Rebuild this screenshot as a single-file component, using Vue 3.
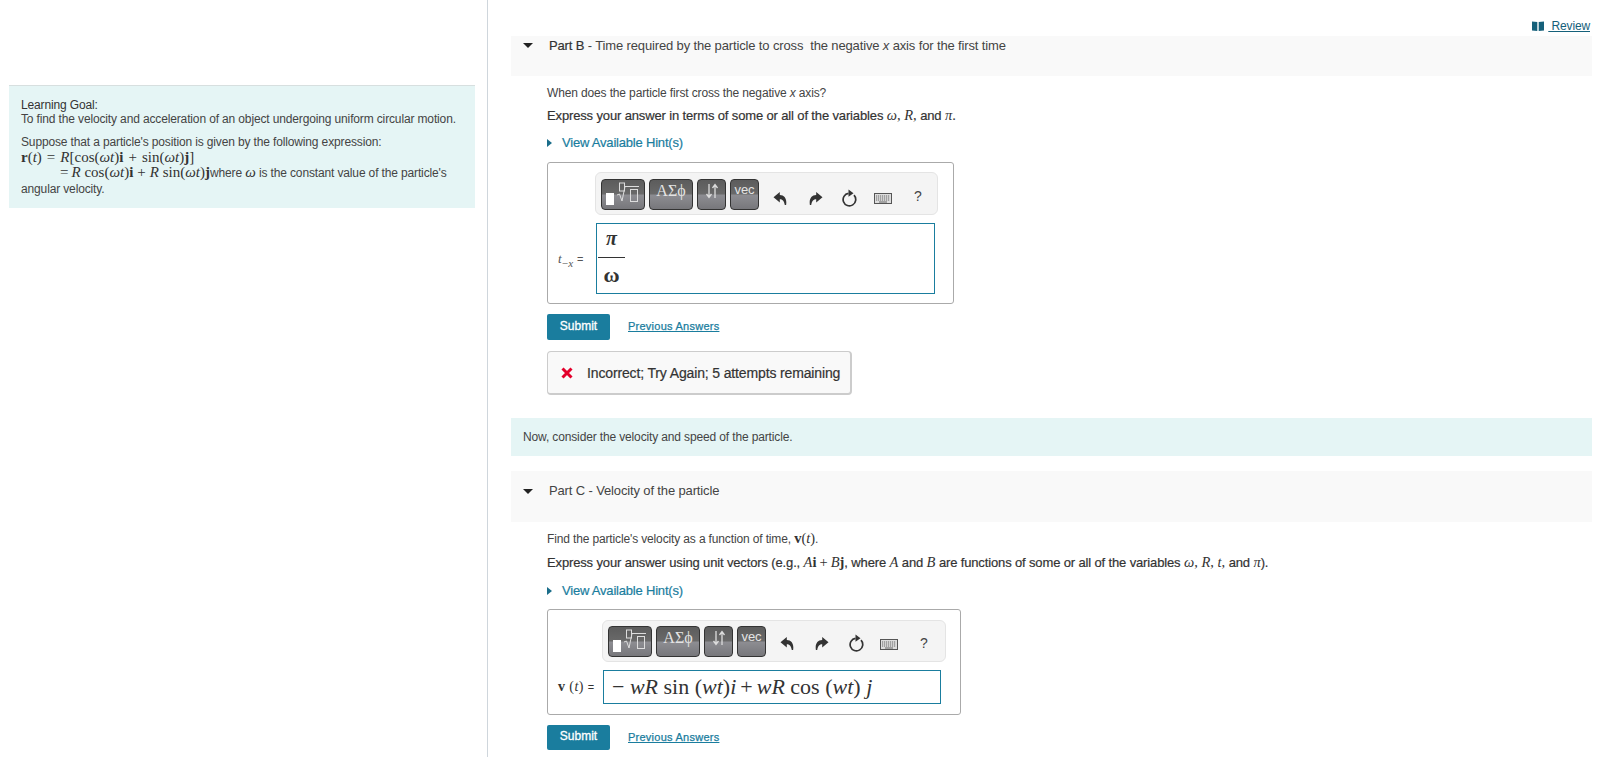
<script setup>
</script>

<template>
  <div class="page">
    <svg class="defs" width="0" height="0" aria-hidden="true">
      <symbol id="undo" viewBox="0 0 14 15"><path d="M6.800 1 .5 6.300l6.300 5.200V8.300c2.600 0 4.200 1.300 5 5.700h1.300c1-6-1.400-9.800-6.300-10z" fill="#333"/></symbol>
      <symbol id="redo" viewBox="0 0 14 15"><path d="M7.200 1l6.300 5.300-6.300 5.200V8.300c-2.600 0-4.200 1.300-5 5.700H.9C-.1 8 2.300 4.200 7.200 4z" fill="#333"/></symbol>
      <symbol id="reload" viewBox="0 0 17 18"><path d="M7.500 4.300A6.300 6.300 0 1 0 13 6.200" fill="none" stroke="#333" stroke-width="1.700"/><path d="M7.500 .6v7.200l5-3.600z" fill="#333"/></symbol>
      <symbol id="keys" viewBox="0 0 18 11"><rect x=".5" y=".5" width="17" height="10" fill="#ddd" stroke="#555"/><path d="M2 3h14M2 5h14M2 7h14" stroke="#666" stroke-dasharray="1.200 .8"/><path d="M5 9h8" stroke="#666"/></symbol>
      <symbol id="radical" viewBox="0 0 26 20"><rect x="5.500" y="1" width="5" height="8" fill="none" stroke="#ddd"/><path d="M3 13l2.500-1 2.500 7L11 4.500h14" fill="none" stroke="#ddd"/><rect x="16.500" y="7.500" width="7" height="12" fill="none" stroke="#ddd"/></symbol>
      <symbol id="arrows" viewBox="0 0 16 16"><path d="M5 1v13M2.500 11 5 14.500 7.500 11M11 15V2M8.500 5 11 1.500 13.500 5" fill="none" stroke="#ddd" stroke-width="1.300"/></symbol>
    </svg>

    <aside class="left">
      <section class="goal">
        <div class="goal-title">Learning Goal:</div>
        <div>To find the velocity and acceleration of an object undergoing uniform circular motion.</div>
        <p class="suppose">Suppose that a particle's position is given by the following expression:</p>
        <div class="eq"><b>r</b>(<i>t</i>)<span class="op wide">=</span><i>R</i>[cos(<i>ωt</i>)<b>i</b><span class="op wide">+</span>sin(<i>ωt</i>)<b>j</b>]</div>
        <div class="eq-line"><span class="eq eq-indent"><span class="op">=</span><i>R</i> cos(<i>ωt</i>)<b>i</b><span class="op big">+</span><i>R</i> sin(<i>ωt</i>)<b>j</b></span>where <span class="eq"><i>ω</i></span> is the constant value of the particle's</div>
        <div>angular velocity.</div>
      </section>
    </aside>

    <main class="right">
      <div class="review"><svg width="12" height="10" viewBox="0 0 12 10"><path d="M0 .5 5.300 1v9L0 9.500zM6.700 1 12 .5v9L6.700 10z" fill="#15607a"/></svg><a>&nbsp;Review</a></div>

      <header class="part part-b">
        <span class="caret"></span>
        <span><span class="strong">Part B</span> - Time required by the particle to cross &nbsp;the negative <i>x</i> axis for the first time</span>
      </header>

      <div class="body body-b">
        <p class="q">When does the particle first cross the negative <i>x</i> axis?</p>
        <p class="ins">Express your answer in terms of some or all of the variables <span class="eq n"><i>ω</i>, <i>R</i>,</span> and <span class="eq n"><i>π</i>.</span></p>
        <div class="hint"><span class="hint-caret"></span>View Available Hint(s)</div>

        <div class="box box-b">
          <div class="toolbar tb-b">
            <div class="btn w44"><span class="white"></span><svg class="rad" width="26" height="20"><use href="#radical"/></svg></div>
            <div class="btn w44 sym">ΑΣϕ</div>
            <div class="btn w30 arrows"><svg width="16" height="16"><use href="#arrows"/></svg></div>
            <div class="btn w30 vec">vec</div>
            <svg class="t t1" width="14" height="15"><use href="#undo"/></svg>
            <svg class="t t2" width="14" height="15"><use href="#redo"/></svg>
            <svg class="t t3" width="17" height="18"><use href="#reload"/></svg>
            <svg class="t t4" width="18" height="11"><use href="#keys"/></svg>
            <span class="qm">?</span>
          </div>
          <div class="answer-row">
            <span class="label label-b"><i>t</i><sub>−<i>x</i></sub> <span class="sans">=</span></span>
            <div class="input input-b">
              <div class="frac"><span class="num"><i>π</i></span><span class="den">ω</span></div>
            </div>
          </div>
        </div>

        <div class="actions"><button class="submit">Submit</button><a class="prev">Previous Answers</a></div>
        <div class="feedback">
          <svg width="12" height="12" viewBox="0 0 12 12"><path d="M1.500 1.500l9 9M10.500 1.500l-9 9" stroke="#e3002b" stroke-width="3"/></svg>
          <span>Incorrect; Try Again; 5 attempts remaining</span>
        </div>
      </div>

      <div class="band">Now, consider the velocity and speed of the particle.</div>

      <header class="part part-c">
        <span class="caret"></span>
        <span>Part C - Velocity of the particle</span>
      </header>

      <div class="body body-c">
        <p class="q">Find the particle's velocity as a function of time, <span class="eq n"><b>v</b>(<i>t</i>)</span>.</p>
        <p class="ins ins-c">Express your answer using unit vectors (e.g., <span class="eq n"><i>A</i><b>i</b><span class="op">+</span><i>B</i><b>j</b></span>, where <span class="eq n"><i>A</i></span> and <span class="eq n"><i>B</i></span> are functions of some or all of the variables <span class="eq n"><i>ω</i>, <i>R</i>, <i>t</i>,</span> and <span class="eq n"><i>π</i></span>).</p>
        <div class="hint hint-c"><span class="hint-caret"></span>View Available Hint(s)</div>

        <div class="box box-c">
          <div class="toolbar tb-c">
            <div class="btn w44"><span class="white"></span><svg class="rad" width="26" height="20"><use href="#radical"/></svg></div>
            <div class="btn w44 sym">ΑΣϕ</div>
            <div class="btn w30 arrows"><svg width="16" height="16"><use href="#arrows"/></svg></div>
            <div class="btn w30 vec">vec</div>
            <svg class="t t1" width="14" height="15"><use href="#undo"/></svg>
            <svg class="t t2" width="14" height="15"><use href="#redo"/></svg>
            <svg class="t t3" width="17" height="18"><use href="#reload"/></svg>
            <svg class="t t4" width="18" height="11"><use href="#keys"/></svg>
            <span class="qm">?</span>
          </div>
          <div class="answer-row">
            <span class="label label-c"><b>v</b> (<i>t</i>) <span class="sans">=</span></span>
            <div class="input input-c">− <i>wR</i> sin (<i>wt</i>)<i>i</i><span class="op big">+</span><i>wR</i> cos (<i>wt</i>) <i>j</i></div>
          </div>
        </div>

        <div class="actions"><button class="submit sub-c">Submit</button><a class="prev">Previous Answers</a></div>
      </div>
    </main>
  </div>
</template>

<style>
html, body { margin: 0; background: #fff; }
</style>

<style scoped>
.page { display: flex; width: 1609px; height: 757px; overflow: hidden; font: 12px/14px "Liberation Sans", Arial, sans-serif; letter-spacing: -.14px; color: #444; }
.defs { position: absolute; }
.left { width: 487px; border-right: 1px solid #cfd6dc; padding-top: 85px; flex: none; }
.goal { margin-left: 9px; width: 466px; height: 123px; box-sizing: border-box; background: #e5f5f5; border-top: 1px solid #d7dfdf; padding: 12px 12px 0; color: #444; }
.goal-title { color: #333; }
.suppose { margin: 9px 0 1px; }
.eq { font-family: "Liberation Serif", serif; font-size: 15px; letter-spacing: 0; color: #333; }
.eq-line { line-height: 17px; }
.eq-indent { padding-left: 36px; }
.n { font-size: 14.500px; line-height: 12px; }
.op { margin: 0 3px; }
.big { margin: 0 4px; }
.wide { margin: 0 5px; }
.right { flex: 1; position: relative; padding-left: 23px; min-width: 0; }
.review { position: absolute; top: 19px; right: 19px; display: flex; align-items: center; gap: 4px; color: #15607a; }
.review a { text-decoration: underline; white-space: pre; }
.part { background: #f9f9f9; width: 1081px; display: flex; gap: 16px; padding-left: 12px; box-sizing: border-box; color: #444; font-size: 13px; }
.part-b { margin-top: 36px; height: 40px; padding-top: 3px; }
.part-c { margin-top: 15px; height: 51px; padding-top: 13px; }
.part-b .caret { margin-top: 4px; }
.strong { color: #333; -webkit-text-stroke: .2px #333; }
.caret { width: 0; height: 0; margin-top: 5px; border: 5px solid transparent; border-top: 5px solid #222; border-bottom: 0; }
.body { padding-left: 36px; }
.body-b { padding-top: 10px; height: 333px; box-sizing: border-box; }
.body-c { padding-top: 10px; }
p { margin: 0; }
.ins { margin-top: 9px; color: #333; font-size: 13px; -webkit-text-stroke: .2px #333; white-space: nowrap; }
.ins-c { margin-top: 10px; }
.ins .eq { -webkit-text-stroke: 0; }
.hint { margin-top: 13px; color: #1a7d9e; font-size: 13px; letter-spacing: -.2px; -webkit-text-stroke: .2px #1a7d9e; display: flex; align-items: center; gap: 10px; }
.hint-c { margin-top: 14px; }
.hint-caret { width: 0; height: 0; border-left: 5px solid #1a6d8a; border-top: 4px solid transparent; border-bottom: 4px solid transparent; }
.box { position: relative; box-sizing: border-box; border: 1px solid #aaa; border-radius: 3px; margin-top: 12px; }
.box-b { width: 407px; height: 142px; }
.box-c { width: 414px; height: 106px; margin-top: 11px; }
.toolbar { position: relative; display: flex; gap: 4px; align-items: flex-start; box-sizing: border-box; background: #f4f4f4; border: 1px solid #e4e4e4; border-radius: 6px; height: 43px; padding: 6px 5px 0; }
.tb-b { margin: 9px 15px 0 47px; }
.tb-c { margin: 10px 14px 0 54px; height: 42px; padding-top: 5px; }
.btn { box-sizing: border-box; height: 31px; border: 1px solid #333; border-radius: 4px; background: linear-gradient(#5c5c5c 0, #696969 48%, #8d8d92 52%, #77777b 100%); color: #e4e4e4; display: flex; align-items: center; justify-content: center; position: relative; flex: none; }
.w44 { width: 44px; }
.w30 { width: 29px; }
.white { width: 8px; height: 12px; background: #fff; margin: 8px 0 0 -1px; }
.rad { margin: -6px 0 0 0; }
.sym { font: 16px/1 "Liberation Serif", serif; letter-spacing: 0; padding-bottom: 8px; }
.arrows { padding-bottom: 8px; }
.vec { font: 13px/1 "Liberation Sans", sans-serif; letter-spacing: 0; padding-bottom: 11px; }
.t { position: absolute; }
.qm { position: absolute; font-size: 14px; color: #444; }
.tb-b .t1 { left: 177px; top: 18px; } .tb-b .t2 { left: 213px; top: 18px; } .tb-b .t3 { left: 245px; top: 16px; } .tb-b .t4 { left: 278px; top: 20px; } .tb-b .qm { left: 318px; top: 16px; }
.tb-c .t1 { left: 177px; top: 15px; } .tb-c .t2 { left: 212px; top: 15px; } .tb-c .t3 { left: 245px; top: 13px; } .tb-c .t4 { left: 277px; top: 18px; } .tb-c .qm { left: 317px; top: 15px; }
.answer-row { display: flex; align-items: center; margin-top: 8px; }
.label { font-family: "Liberation Serif", serif; color: #555; white-space: nowrap; letter-spacing: 0; }
.label-b { width: 38px; margin-left: 10px; font-size: 13px; }
.label-c { width: 45px; margin-left: 10px; font-size: 14px; letter-spacing: .4px; color: #333; }
.label sub { font-size: 11px; line-height: 0; letter-spacing: .5px; }
.sans { font-family: "Liberation Sans", sans-serif; font-size: 11px; }
.input { box-sizing: border-box; border: 1px solid #1a7d9e; background: #fff; }
.input-b { width: 339px; height: 71px; padding: 3px 1px; }
.input-c { width: 338px; height: 34px; padding-left: 8px; font: 22px/31px "Liberation Serif", serif; letter-spacing: 0; color: #333; white-space: nowrap; }
.frac { width: 27px; display: flex; flex-direction: column; align-items: center; font: bold 20px/22px "Liberation Serif", serif; letter-spacing: 0; color: #333; }
.num { display: block; box-sizing: border-box; width: 100%; text-align: center; height: 31px; border-bottom: 1px solid #333; }
.den { margin-top: 6px; font-size: 22px; }
.actions { display: flex; align-items: center; gap: 18px; margin-top: 10px; }
.submit { width: 63px; height: 26px; border: 0; border-radius: 2px; background: #1a7d9e; color: #fff; font: 12px "Liberation Sans", sans-serif; -webkit-text-stroke: .3px #fff; padding: 0 0 3px; }
.sub-c { height: 25px; }
.prev { font-size: 11px; letter-spacing: .25px; color: #1a7d9e; text-decoration: underline; -webkit-text-stroke: .25px #1a7d9e; margin-top: -2px; }
.feedback { box-sizing: border-box; width: 305px; height: 44px; margin-top: 11px; background: #f9f9f9; border: 1px solid #ccc; border-bottom-width: 2px; border-right-width: 2px; border-radius: 4px; display: flex; align-items: center; gap: 14px; padding-left: 13px; color: #333; font-size: 14px; -webkit-text-stroke: .2px #333; }
.band { width: 1081px; height: 38px; margin-top: 9px; background: #e5f5f5; padding: 12px 12px 0; box-sizing: border-box; }
</style>
